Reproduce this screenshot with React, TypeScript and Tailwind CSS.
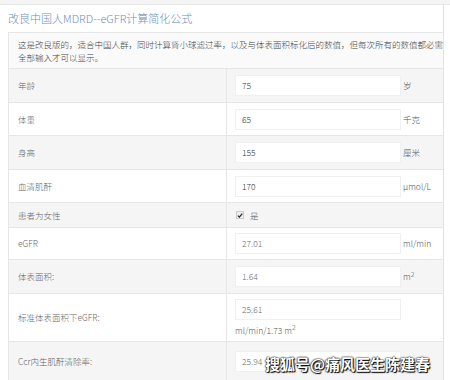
import React from 'react';

const font = { fontFamily: '"Noto Sans CJK SC", "Noto Sans", sans-serif' };

type Row = {
  label: string;
  value?: string;
  unit?: React.ReactNode;
  h: string;
  gray: boolean;
  calc?: boolean;
};

const rows: Row[] = [
  { label: '年龄', value: '75', unit: '岁', h: 'h-[34px]', gray: true },
  { label: '体重', value: '65', unit: '千克', h: 'h-[33px]', gray: false },
  { label: '身高', value: '155', unit: '厘米', h: 'h-[34px]', gray: true },
  { label: '血清肌酐', value: '170', unit: 'μmol/L', h: 'h-[33px]', gray: false },
];

const calcRows: Row[] = [
  { label: 'eGFR', value: '27.01', unit: 'ml/min', h: 'h-[32px]', gray: false, calc: true },
  {
    label: '体表面积:',
    value: '1.64',
    unit: (
      <span>
        m<sup className="text-[7px]">2</sup>
      </span>
    ),
    h: 'h-[34px]',
    gray: true,
    calc: true,
  },
];

function Input({ value, calc }: { value: string; calc?: boolean }) {
  return (
    <div
      className={`w-[166px] h-[21px] bg-white border border-[#f0f0f0] flex items-center pl-[6px] text-[8.5px] ${
        calc ? 'text-[#6b6b6b]' : 'text-[#333]'
      }`}
    >
      {value}
    </div>
  );
}

function TableRow({ row }: { row: Row }) {
  return (
    <div className={`flex border-t border-[#e6e6e6] ${row.h} ${row.gray ? 'bg-[#f5f5f5]' : 'bg-white'}`}>
      <div className="w-[217px] flex items-center pl-[9px] text-[8.5px] text-[#666]">{row.label}</div>
      <div className="flex-1 flex items-center border-l border-[#e6e6e6] pl-[8px]">
        <Input value={row.value ?? ''} calc={row.calc} />
        <span className="ml-[2px] text-[8.5px] text-[#555]">{row.unit}</span>
      </div>
    </div>
  );
}

export default function App() {
  return (
    <div className="relative w-[450px] h-[380px] overflow-hidden bg-white font-light" style={font}>
      <div className="h-[5px] bg-[#f4f4f4] border-b border-[#e8e8e8]" />
      <div className="ml-[7px] w-[437px] border-r border-[#e2e2e2]">
        {/* title */}
        <div className="h-[27px] flex items-center pl-[1px] text-[11px] text-[#6f8fb8]">
          改良中国人MDRD--eGFR计算简化公式
        </div>

        {/* description */}
        <div className="h-[36px] ml-[1px] border-t border-l border-[#e6e6e6] bg-[#fafafa] pl-[9px] pt-[5px] text-[8.5px] leading-[13px] text-[#444]">
          这是改良版的，适合中国人群，同时计算肾小球滤过率，以及与体表面积标化后的数值，但每次所有的数值都必需全部输入才可以显示。
        </div>

        {/* form table */}
        <div className="ml-[1px] border-l border-[#e6e6e6]">
          {rows.map((r) => (
            <TableRow key={r.label} row={r} />
          ))}

          <div className="flex h-[25px] border-t border-[#e6e6e6] bg-[#f5f5f5]">
            <div className="w-[217px] flex items-center pl-[9px] text-[8.5px] text-[#666]">患者为女性</div>
            <div className="flex-1 flex items-center gap-[6px] border-l border-[#e6e6e6] pl-[9px] text-[8.5px] text-[#555]">
              <span className="w-[8px] h-[8px] bg-[#eee] border border-[#ccc] flex items-center justify-center">
                <svg viewBox="0 0 10 10" className="w-[7px] h-[7px]">
                  <path d="M1.5 5.2 L4 7.8 L8.7 1.8" fill="none" stroke="#222" strokeWidth="2" />
                </svg>
              </span>
              是
            </div>
          </div>

          {calcRows.map((r) => (
            <TableRow key={r.label} row={r} />
          ))}

          <div className="flex h-[48px] border-t border-[#e6e6e6] bg-white">
            <div className="w-[217px] flex items-center pl-[9px] text-[8.5px] text-[#666]">标准体表面积下eGFR:</div>
            <div className="flex-1 flex flex-col justify-center border-l border-[#e6e6e6] pl-[8px]">
              <Input value="25.61" calc />
              <div className="mt-[4px] text-[8.5px] text-[#555]">
                ml/min/1.73 m<sup className="text-[7px]">2</sup>
              </div>
            </div>
          </div>

          <div className="flex h-[40px] border-t border-[#e6e6e6] bg-[#f5f5f5]">
            <div className="w-[217px] flex items-center pl-[9px] text-[8.5px] text-[#666]">Ccr内生肌酐清除率:</div>
            <div className="flex-1 flex items-center border-l border-[#e6e6e6] pl-[8px]">
              <Input value="25.94" calc />
            </div>
          </div>
        </div>
      </div>

      {/* watermark */}
      <div className="absolute left-[265px] top-[353px] text-[15px] font-bold text-white [text-shadow:0_0_1px_#000,0_0_2px_#000,1px_1px_1px_#000]">
        搜狐号@痛风医生陈建春
      </div>
    </div>
  );
}
